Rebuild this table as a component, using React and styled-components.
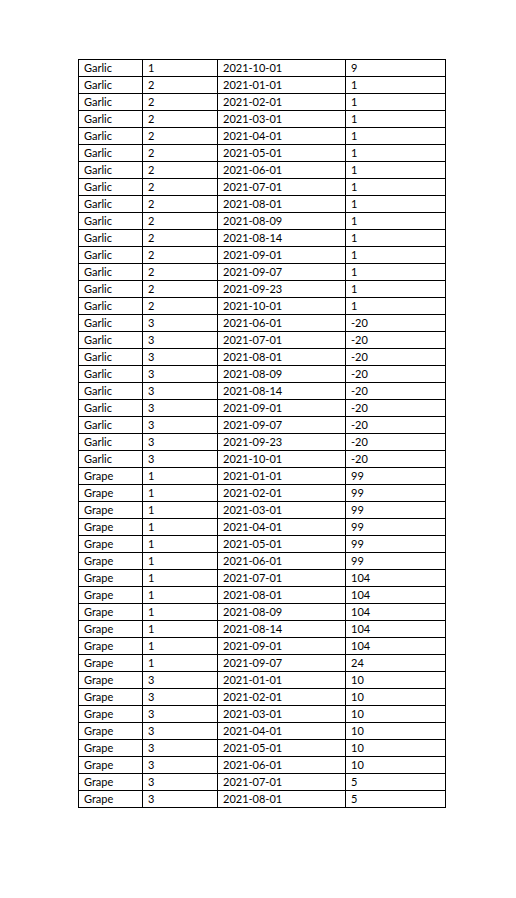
import styled, { createGlobalStyle } from "styled-components";

const GlobalStyle = createGlobalStyle`
  html, body {
    margin: 0;
    padding: 0;
    background: #ffffff;
  }
`;

const rows = [
  ["Garlic", "1", "2021-10-01", "9"],
  ...["01-01", "02-01", "03-01", "04-01", "05-01", "06-01", "07-01", "08-01", "08-09", "08-14", "09-01", "09-07", "09-23", "10-01"].map(
    (d) => ["Garlic", "2", "2021-" + d, "1"]
  ),
  ...["06-01", "07-01", "08-01", "08-09", "08-14", "09-01", "09-07", "09-23", "10-01"].map(
    (d) => ["Garlic", "3", "2021-" + d, "-20"]
  ),
  ["Grape", "1", "2021-01-01", "99"],
  ["Grape", "1", "2021-02-01", "99"],
  ["Grape", "1", "2021-03-01", "99"],
  ["Grape", "1", "2021-04-01", "99"],
  ["Grape", "1", "2021-05-01", "99"],
  ["Grape", "1", "2021-06-01", "99"],
  ["Grape", "1", "2021-07-01", "104"],
  ["Grape", "1", "2021-08-01", "104"],
  ["Grape", "1", "2021-08-09", "104"],
  ["Grape", "1", "2021-08-14", "104"],
  ["Grape", "1", "2021-09-01", "104"],
  ["Grape", "1", "2021-09-07", "24"],
  ["Grape", "3", "2021-01-01", "10"],
  ["Grape", "3", "2021-02-01", "10"],
  ["Grape", "3", "2021-03-01", "10"],
  ["Grape", "3", "2021-04-01", "10"],
  ["Grape", "3", "2021-05-01", "10"],
  ["Grape", "3", "2021-06-01", "10"],
  ["Grape", "3", "2021-07-01", "5"],
  ["Grape", "3", "2021-08-01", "5"],
];

const widths = [64, 75, 128, 100];

const Page = styled.div`
  width: 516px;
  height: 898px;
  padding: 59px 0 0 78px;
  box-sizing: border-box;
  font-family: Lato, "Liberation Sans", sans-serif;
`;

const Table = styled.table`
  border-collapse: collapse;
  table-layout: fixed;
  border: 1px solid #000;
`;

const Row = styled.tr`
  height: 17px;
`;

const Cell = styled.td`
  border: 1px solid #000;
  padding: 0 0 0 5px;
  height: 16px;
  font-size: 11px;
  line-height: 16px;
  color: #000;
  white-space: nowrap;
  box-sizing: border-box;
`;

export default function App() {
  return (
    <Page>
      <GlobalStyle />
      <Table>
        <colgroup>
          {widths.map((w, i) => (
            <col key={i} style={{ width: w }} />
          ))}
        </colgroup>
        <tbody>
          {rows.map((r, i) => (
            <Row key={i}>
              {r.map((c, j) => (
                <Cell key={j}>{c}</Cell>
              ))}
            </Row>
          ))}
        </tbody>
      </Table>
    </Page>
  );
}
